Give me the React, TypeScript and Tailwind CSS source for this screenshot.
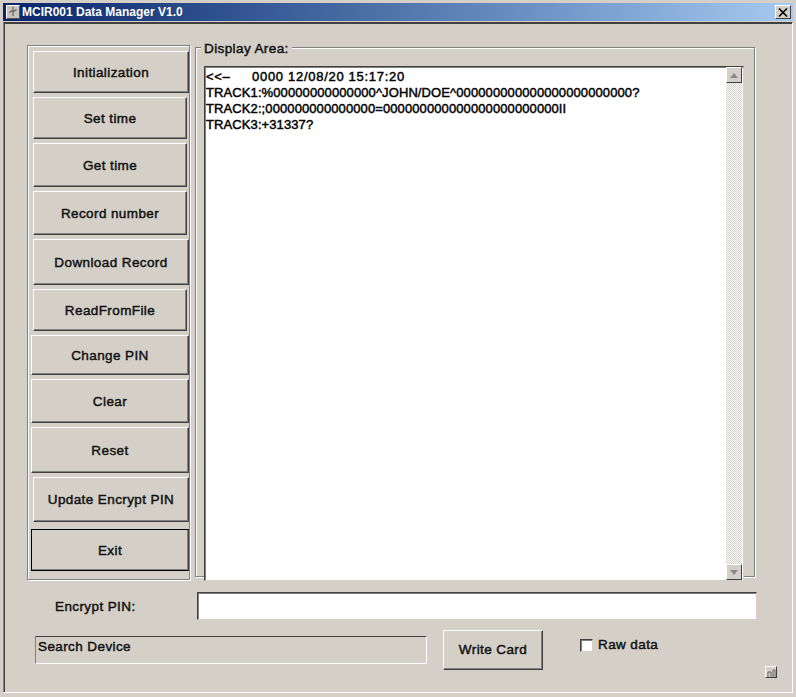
export default function App() {
  const raised = "flex items-center justify-center bg-[#d4d0c8] border border-t-white border-l-white border-r-[#404040] border-b-[#404040] shadow-[inset_-1px_-1px_0_#808080]";
  const buttons: [string, string][] = [
    ["Initialization", "ml-[5px] mt-[5px] w-[156px] h-[42px]"],
    ["Set time", "ml-[5px] mt-[4px] w-[154px] h-[42px]"],
    ["Get time", "ml-[5px] mt-[4px] w-[154px] h-[44px]"],
    ["Record number", "ml-[5px] mt-[4px] w-[154px] h-[44px]"],
    ["Download Record", "ml-[5px] mt-[4px] w-[156px] h-[46px]"],
    ["ReadFromFile", "ml-[5px] mt-[4px] w-[154px] h-[42px]"],
    ["Change PIN", "ml-[3px] mt-[4px] w-[158px] h-[40px]"],
    ["Clear", "ml-[3px] mt-[4px] w-[158px] h-[44px]"],
    ["Reset", "ml-[3px] mt-[4px] w-[158px] h-[46px]"],
    ["Update Encrypt PIN", "ml-[5px] mt-[4px] w-[156px] h-[45px]"],
  ];
  return (
    <div className="w-[796px] h-[697px] bg-[#d4d0c8] flex flex-col text-[13.5px] font-normal [-webkit-text-stroke:0.45px_#111] tracking-[0.4px] text-[#111] overflow-hidden [font-family:'Liberation_Sans',Arial,sans-serif]">
      <div className="mx-[3px] mt-[3px] h-[18px] shrink-0 flex items-center bg-gradient-to-r from-[#0a246a] to-[#a6caf0] text-white text-[12px] font-bold tracking-[0px] [-webkit-text-stroke:0px]">
        <div className="ml-[3px] w-[14px] h-[14px] bg-[#c8c4bc] border border-t-white border-l-white border-r-[#555] border-b-[#555] flex items-center justify-center">
          <svg width="10" height="12" viewBox="0 0 10 12"><path d="M5 1v9M5 4l-3 2v1M5 6l3-2V3" stroke="#666" strokeWidth="1.2" fill="none" /></svg>
        </div>
        <span className="ml-[2px]">MCIR001 Data Manager V1.0</span>
        <div className="ml-auto mr-[2px] w-[16px] h-[14px] bg-[#d4d0c8] border border-t-white border-l-white border-r-[#404040] border-b-[#404040] flex items-center justify-center">
          <svg width="10" height="9" viewBox="0 0 10 9"><path d="M1 0.5L9 8.5M9 0.5L1 8.5" stroke="#000" strokeWidth="1.6" fill="none" /></svg>
        </div>
      </div>
      <div className="mt-[1px] mx-[3px] w-[790px] h-[671px] border border-l-[#808080] border-t-[#404040] border-r-white border-b-white shadow-[inset_1px_1px_0_#404040] flex flex-col">
        <div className="flex items-start mt-[22px] h-[535px]">
          <div className="ml-[23px] w-[163px] h-[535px] border border-[#808080] shadow-[inset_1px_1px_0_#fff,1px_1px_0_#fff] shrink-0">
            {buttons.map(([label, cls]) => (
              <div key={label} className={raised + " pt-[2px] " + cls}>{label}</div>
            ))}
            <div className="ml-[3px] mt-[7px] w-[158px] h-[42px] pt-[2px] flex items-center justify-center bg-[#d4d0c8] border border-black border-r-[#404040] shadow-[inset_-1px_-1px_0_#808080,inset_0_-1px_0_#404040]">Exit</div>
          </div>
          <div className="relative ml-[5px] mt-[2px] w-[560px] h-[530px] border border-[#808080] shadow-[inset_1px_1px_0_#fff,1px_1px_0_#fff]">
            <span className="absolute left-[5px] top-[-7px] bg-[#d4d0c8] px-[3px] leading-[15px]">Display Area:</span>
            <div className="ml-[8px] mt-[18px] w-[540px] h-[515px] flex bg-white border border-t-[#404040] border-l-[#404040] border-r-[#d4d0c8] border-b-[#d4d0c8] shadow-[inset_1px_1px_0_#808080]">
              <div className="flex-1 pl-[1px] pt-[2px] leading-[16px] whitespace-pre text-black text-[13px] tracking-[0.1px] [-webkit-text-stroke:0.45px_#000]">
                <div className="tracking-[0.7px]">{"<<\u2013     0000 12/08/20 15:17:20"}</div>
                <div>TRACK1:%00000000000000^JOHN/DOE^000000000000000000000000?</div>
                <div>TRACK2:;000000000000000=000000000000000000000000II</div>
                <div>TRACK3:+31337?</div>
              </div>
              <div className="w-[16px] mr-[1px] flex flex-col justify-between bg-[repeating-conic-gradient(#d4d0c8_0_25%,#fff_0_50%)] bg-[length:2px_2px]">
                <div className="h-[16px] bg-[#d4d0c8] border border-t-white border-l-white border-r-[#404040] border-b-[#404040] flex items-center justify-center">
                  <svg width="8" height="5" viewBox="0 0 8 5"><path d="M4 0L8 5H0Z" fill="#8a8890" /></svg>
                </div>
                <div className="h-[16px] bg-[#d4d0c8] border border-t-white border-l-white border-r-[#404040] border-b-[#404040] flex items-center justify-center">
                  <svg width="8" height="5" viewBox="0 0 8 5"><path d="M0 0H8L4 5Z" fill="#8a8890" /></svg>
                </div>
              </div>
            </div>
          </div>
        </div>
        <div className="flex items-center mt-[12px] h-[28px]">
          <span className="ml-[51px] w-[142px] pt-[2px]">Encrypt PIN:</span>
          <div className="w-[560px] h-[28px] bg-white border border-t-[#404040] border-l-[#404040] border-r-[#d4d0c8] border-b-[#d4d0c8] shadow-[inset_1px_1px_0_#808080]" />
        </div>
        <div className="relative flex items-start mt-[10px]">
          <div className="ml-[31px] mt-[6px] w-[392px] h-[28px] border border-t-[#404040] border-l-[#808080] border-r-white border-b-white pl-[2px] leading-[20px]">Search Device</div>
          <div className={raised + " ml-[16px] w-[100px] h-[40px]"}>Write Card</div>
          <div className="ml-[37px] mt-[9px] w-[13px] h-[13px] bg-white border border-t-[#404040] border-l-[#404040] border-r-[#d4d0c8] border-b-[#d4d0c8] shadow-[inset_1px_1px_0_#808080]" />
          <span className="ml-[5px] mt-[7px] leading-[16px]">Raw data</span>
          <div className="absolute left-[761px] top-[36px] w-[12px] h-[12px] border border-t-white border-l-white border-r-[#404040] border-b-[#404040] flex items-end justify-center">
            <svg width="9" height="8" viewBox="0 0 9 8"><path d="M1 8V3h3v5M6 8V1h2v7" stroke="#666" fill="none" /></svg>
          </div>
        </div>
      </div>
    </div>
  );
}
